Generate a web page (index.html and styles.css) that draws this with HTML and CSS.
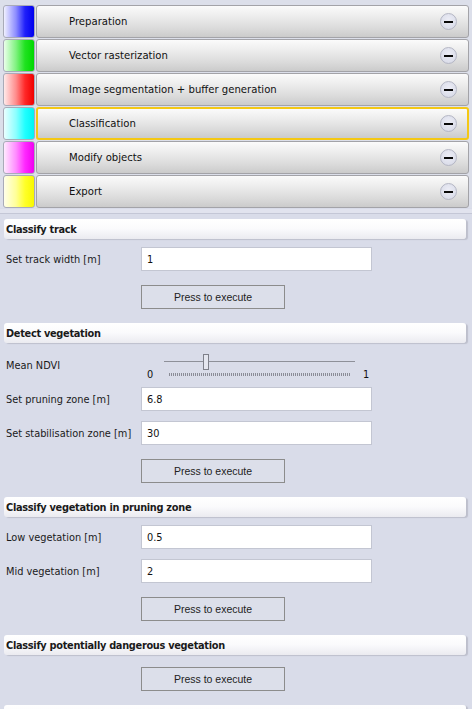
FILE: index.html
```html
<!DOCTYPE html>
<html>
<head>
<meta charset="utf-8">
<link rel="stylesheet" href="styles.css">
</head>
<body>
<div class="steps">
  <div class="step"><div class="swatch sw-blue"></div><div class="bar"><span class="bar-title">Preparation</span><span class="minus"><span></span></span></div></div>
  <div class="step"><div class="swatch sw-green"></div><div class="bar"><span class="bar-title">Vector rasterization</span><span class="minus"><span></span></span></div></div>
  <div class="step"><div class="swatch sw-red"></div><div class="bar"><span class="bar-title">Image segmentation + buffer generation</span><span class="minus"><span></span></span></div></div>
  <div class="step"><div class="swatch sw-cyan"></div><div class="bar active"><span class="bar-title">Classification</span><span class="minus"><span></span></span></div></div>
  <div class="step"><div class="swatch sw-magenta"></div><div class="bar"><span class="bar-title">Modify objects</span><span class="minus"><span></span></span></div></div>
  <div class="step"><div class="swatch sw-yellow"></div><div class="bar"><span class="bar-title">Export</span><span class="minus"><span></span></span></div></div>
</div>
<div class="divider"></div>
<div class="panel">
  <div class="section">
    <div class="sec-head">Classify track</div>
    <div class="field"><span class="label">Set track width [m]</span><div class="input">1</div></div>
    <div class="btn-row"><div class="btn">Press to execute</div></div>
  </div>
  <div class="section">
    <div class="sec-head">Detect vegetation</div>
    <div class="slider-row">
      <span class="label">Mean NDVI</span>
      <div class="slider">
        <div class="track"></div>
        <div class="scale"><span class="end0">0</span><div class="ticks"></div><span class="end1">1</span></div>
        <div class="thumb"></div>
      </div>
    </div>
    <div class="field flush"><span class="label">Set pruning zone [m]</span><div class="input">6.8</div></div>
    <div class="field gap"><span class="label">Set stabilisation zone [m]</span><div class="input">30</div></div>
    <div class="btn-row"><div class="btn">Press to execute</div></div>
  </div>
  <div class="section">
    <div class="sec-head">Classify vegetation in pruning zone</div>
    <div class="field"><span class="label">Low vegetation [m]</span><div class="input">0.5</div></div>
    <div class="field gap"><span class="label">Mid vegetation [m]</span><div class="input">2</div></div>
    <div class="btn-row"><div class="btn">Press to execute</div></div>
  </div>
  <div class="section">
    <div class="sec-head">Classify potentially dangerous vegetation</div>
    <div class="btn-row short"><div class="btn">Press to execute</div></div>
  </div>
  <div class="section">
    <div class="sec-head"></div>
  </div>
</div>
</body>
</html>
```

FILE: styles.css
```css
html, body {
  margin: 0;
  padding: 0;
  background: #d9dce9;
  width: 472px;
  height: 709px;
  overflow: hidden;
  font-family: "DejaVu Sans", sans-serif;
  font-size: 9.8px;
  color: #111;
}

.steps {
  padding: 5px 3px 0 3px;
  background: #dcdfea;
}

.step {
  display: flex;
  height: 33px;
  margin-bottom: 1px;
}

.swatch {
  width: 32px;
  border: 1px solid #a9abb8;
  border-radius: 3px;
  box-sizing: border-box;
}

.sw-blue { background: linear-gradient(to right, #f0f0ff 0%, #8c8cff 40%, #2020fa 70%, #0000ee 100%); }
.sw-green { background: linear-gradient(to right, #eaffea 0%, #80f280 40%, #20e220 70%, #00d800 100%); }
.sw-red { background: linear-gradient(to right, #ffeaea 0%, #ff8c8c 40%, #ff2828 70%, #f00000 100%); }
.sw-cyan { background: linear-gradient(to right, #eaffff 0%, #8cffff 40%, #20ffff 70%, #00f4f4 100%); }
.sw-magenta { background: linear-gradient(to right, #ffeaff 0%, #ff8cff 40%, #ff28ff 70%, #f000f0 100%); }
.sw-yellow { background: linear-gradient(to right, #ffffea 0%, #ffff98 40%, #ffff28 70%, #f8f800 100%); }

.bar {
  flex: 1;
  margin-left: 1px;
  box-sizing: border-box;
  border: 1px solid #a3a3a8;
  border-radius: 3px;
  background: linear-gradient(to bottom, #fbfbfb 0%, #ececec 35%, #d9d9d9 75%, #cbcbcb 100%);
  display: flex;
  align-items: center;
  padding-left: 32px;
  padding-right: 11px;
}

.bar.active {
  border: 2px solid #f4c814;
  padding-left: 31px;
  padding-right: 10px;
}

.bar-title {
  flex: 1;
  color: #111;
  font-size: 10.1px;
}

.minus {
  width: 17px;
  height: 17px;
  box-sizing: border-box;
  border-radius: 50%;
  border: 1px solid #b4b6c4;
  background: radial-gradient(circle at 50% 40%, #ecedf6 0%, #dcdeea 70%, #cfd1de 100%);
  display: flex;
  align-items: center;
  justify-content: center;
}

.minus span {
  width: 9px;
  height: 2px;
  background: #0a0a0a;
}

.divider {
  height: 4px;
  margin-top: 1px;
  background: #e1e3ee;
  border-bottom: 1px solid #c4c7d6;
}

.panel {
  padding: 5px 4px 0 4px;
}

.section {
  padding-bottom: 14px;
}

.sec-head {
  height: 20px;
  box-sizing: border-box;
  border-radius: 3px;
  background: linear-gradient(to bottom, #ffffff 0%, #fafafc 50%, #ebebf0 100%);
  box-shadow: 2px 1px 1px #bdbfcc;
  font-weight: bold;
  letter-spacing: -0.3px;
  display: flex;
  align-items: center;
  padding-left: 2px;
  padding-top: 1px;
  color: #1a1a1a;
  margin-right: 2px;
}

.field {
  display: flex;
  align-items: center;
  margin-top: 8px;
}

.field.gap {
  margin-top: 10px;
}

.field.flush {
  margin-top: 0;
}

.label {
  width: 137px;
  box-sizing: border-box;
  padding-left: 2px;
  color: #1a1a1a;
}

.input {
  width: 231px;
  height: 24px;
  box-sizing: border-box;
  background: #ffffff;
  border: 1px solid #c3c6d2;
  padding-left: 5px;
  display: flex;
  align-items: center;
  color: #111;
}

.btn-row {
  margin-top: 14px;
  padding-left: 137px;
}

.btn-row.short {
  margin-top: 12px;
}

.btn {
  width: 144px;
  height: 24px;
  box-sizing: border-box;
  border: 1px solid #8c8c8c;
  background: #dcdfea;
  display: flex;
  align-items: center;
  justify-content: center;
  font-family: "Liberation Sans", Arial, sans-serif;
  font-size: 10.5px;
  color: #222;
}

.slider-row {
  display: flex;
  height: 44px;
  align-items: flex-start;
}

.slider-row .label {
  padding-top: 17px;
}

.slider {
  position: relative;
  width: 231px;
  height: 44px;
}

.track {
  margin: 18px 0 0 23px;
  width: 191px;
  height: 1px;
  background: #8e9099;
}

.scale {
  display: flex;
  align-items: center;
  margin-top: 5px;
  height: 14px;
}

.end0 {
  width: 28px;
  padding-left: 6px;
  box-sizing: border-box;
}

.ticks {
  width: 182px;
  height: 3px;
  background: repeating-linear-gradient(to right, #8a8c96 0px, #8a8c96 1px, transparent 1px, transparent 2px);
}

.end1 {
  padding-left: 12px;
}

.thumb {
  position: absolute;
  left: 62px;
  top: 11px;
  width: 6px;
  height: 16px;
  box-sizing: border-box;
  border: 1px solid #7e808a;
  background: #e4e6ef;
}
```
